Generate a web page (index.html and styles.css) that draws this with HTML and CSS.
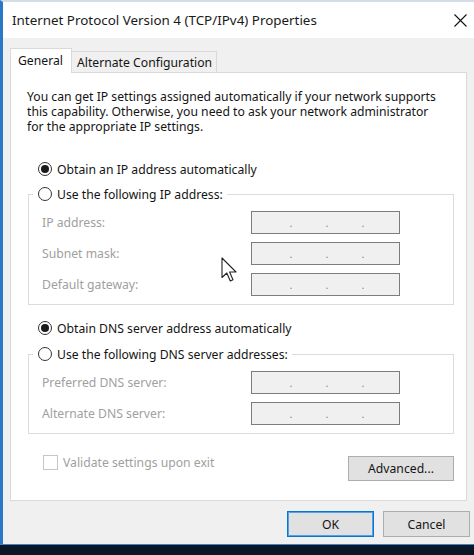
FILE: index.html
```html
<!DOCTYPE html>
<html>
<head>
<meta charset="utf-8">
<link rel="stylesheet" href="styles.css">
</head>
<body>
<div class="screen">
  <div class="window">
    <div class="titlebar">
      <span class="title">Internet Protocol Version 4 (TCP/IPv4) Properties</span>
      <svg class="close" width="13" height="13" viewBox="0 0 13 13"><path d="M0.5 0.5 L12.5 12.5 M12.5 0.5 L0.5 12.5" stroke="#111" stroke-width="1.1" fill="none"/></svg>
    </div>
    <div class="content">
      <div class="tabs">
        <div class="tab active">General</div>
        <div class="tab alt">Alternate Configuration</div>
      </div>
      <div class="panel">
        <p class="desc">You can get IP settings assigned automatically if your network supports<br>this capability. Otherwise, you need to ask your network administrator<br>for the appropriate IP settings.</p>
        <div class="radio-row first"><span class="radio checked"></span>Obtain an IP address automatically</div>
        <fieldset class="group g1">
          <legend><span class="radio"></span>Use the following IP address:</legend>
          <div class="field"><span class="label">IP address:</span><span class="ipbox"><span>.</span><span>.</span><span>.</span></span></div>
          <div class="field"><span class="label">Subnet mask:</span><span class="ipbox"><span>.</span><span>.</span><span>.</span></span></div>
          <div class="field"><span class="label">Default gateway:</span><span class="ipbox"><span>.</span><span>.</span><span>.</span></span></div>
        </fieldset>
        <div class="radio-row second"><span class="radio checked"></span>Obtain DNS server address automatically</div>
        <fieldset class="group g2">
          <legend><span class="radio"></span>Use the following DNS server addresses:</legend>
          <div class="field"><span class="label">Preferred DNS server:</span><span class="ipbox"><span>.</span><span>.</span><span>.</span></span></div>
          <div class="field"><span class="label">Alternate DNS server:</span><span class="ipbox"><span>.</span><span>.</span><span>.</span></span></div>
        </fieldset>
        <div class="bottom-row">
          <div class="check"><span class="box"></span>Validate settings upon exit</div>
          <div class="btn adv">Advanced...</div>
        </div>
      </div>
      <div class="actions">
        <div class="btn ok">OK</div>
        <div class="btn">Cancel</div>
      </div>
    </div>
  </div>
  <div class="taskbar"></div>
  <svg class="cursor" width="17" height="26" viewBox="0 0 17 26"><path d="M1 1 L1 20.5 L5.8 16 L9.3 24 L12 22.8 L8.6 15 L15 15 Z" fill="#fff" stroke="#222" stroke-width="1.1" stroke-linejoin="round"/></svg>
</div>
</body>
</html>
```
FILE: styles.css
```css
* { box-sizing: border-box; }
html, body { margin: 0; padding: 0; }
body {
  width: 474px;
  height: 555px;
  overflow: hidden;
  font-family: "Noto Sans", "Open Sans", sans-serif;
  font-size: 12.2px;
  color: #141414;
  background: #0b1726;
}
.screen {
  position: relative;
  width: 474px;
  height: 555px;
  display: flex;
  flex-direction: column;
}
.window {
  height: 544px;
  display: flex;
  flex-direction: column;
  border-left: 3px solid #2a78c6;
  border-top: 2px solid #d3dde8;
  background: #f0f0f0;
}
.titlebar {
  height: 36px;
  background: #fff;
  display: flex;
  align-items: center;
  justify-content: space-between;
  padding: 0 7px 0 9px;
}
.title {
  font-size: 13.4px;
  color: #1a1a1a;
  white-space: nowrap;
}
.close { display: block; }
.content {
  flex: 1;
  padding: 10px 7px 0 7px;
  display: flex;
  flex-direction: column;
}
.tabs {
  height: 24px;
  display: flex;
  align-items: flex-end;
}
.tab {
  white-space: nowrap;
  border: 1px solid #d9d9d9;
  display: flex;
  align-items: center;
}
.tab.active {
  position: relative;
  z-index: 1;
  width: 62px;
  height: 25px;
  margin-bottom: -1px;
  padding: 0 0 2px 7px;
  background: #fff;
  border-bottom: none;
}
.tab.alt {
  width: 145px;
  height: 21px;
  padding: 0 0 0 5px;
  border-left: none;
  border-bottom: none;
  background: #f0f0f0;
}
.panel {
  height: 429px;
  background: #fff;
  border: 1px solid #d9d9d9;
  padding: 0 12px 0 16px;
  display: flex;
  flex-direction: column;
}
.desc {
  margin: 16px 0 0 0;
  line-height: 15px;
  white-space: nowrap;
}
.radio-row {
  height: 20px;
  display: flex;
  align-items: center;
  gap: 5px;
  padding-left: 11px;
  white-space: nowrap;
}
.radio-row.first { margin-top: 25px; }
.radio-row.second { margin-top: 13px; }
.radio {
  width: 14px;
  height: 14px;
  border: 1px solid #333;
  border-radius: 50%;
  background: #fff;
  display: flex;
  align-items: center;
  justify-content: center;
  flex: none;
}
.radio.checked::after {
  content: "";
  width: 8px;
  height: 8px;
  border-radius: 50%;
  background: #1a1a1a;
}
.group {
  margin: 5px 0 0 1px;
  border: 1px solid #dcdcdc;
  padding: 0 0 8px 0;
  min-width: 0;
}
.group.g2 { margin-top: 6px; }
.group legend {
  height: 20px;
  margin-left: 4px;
  padding: 0 4px 0 5px;
  display: flex;
  align-items: center;
  gap: 5px;
  white-space: nowrap;
}
.field {
  height: 23px;
  display: flex;
  align-items: center;
  padding-left: 13px;
  margin-top: 8px;
}
.field:first-of-type { margin-top: 7px; }
.label {
  width: 209px;
  color: #a0a0a0;
  white-space: nowrap;
}
.ipbox {
  width: 149px;
  height: 23px;
  border: 1px solid #7d7d7d;
  background: #f0f0f0;
  display: flex;
  padding-left: 21px;
  color: #8c8c8c;
  font-size: 11px;
  line-height: 21px;
}
.ipbox span {
  width: 36px;
  text-align: center;
}
.bottom-row {
  margin-top: 21px;
  display: flex;
  justify-content: space-between;
  align-items: flex-start;
}
.check {
  display: flex;
  align-items: center;
  gap: 5px;
  height: 15px;
  margin-left: 16px;
  color: #a0a0a0;
  white-space: nowrap;
}
.box {
  width: 15px;
  height: 15px;
  border: 1px solid #c6c6c6;
  background: #fff;
}
.btn {
  height: 26px;
  width: 87px;
  background: #e1e1e1;
  border: 1px solid #adadad;
  display: flex;
  align-items: center;
  justify-content: center;
  color: #141414;
}
.btn.adv {
  width: 106px;
  height: 25px;
  margin-top: 1px;
}
.actions {
  margin-top: 10px;
  margin-right: -3px;
  display: flex;
  justify-content: flex-end;
  gap: 9px;
}
.btn.ok {
  border: 1px solid #0078d7;
  box-shadow: inset 0 0 0 1px #5aa0e0;
}
.taskbar {
  height: 11px;
  background: #0b1726;
  border-top: 1px solid #3b82cf;
}
.cursor {
  position: absolute;
  left: 221px;
  top: 257px;
}
```
